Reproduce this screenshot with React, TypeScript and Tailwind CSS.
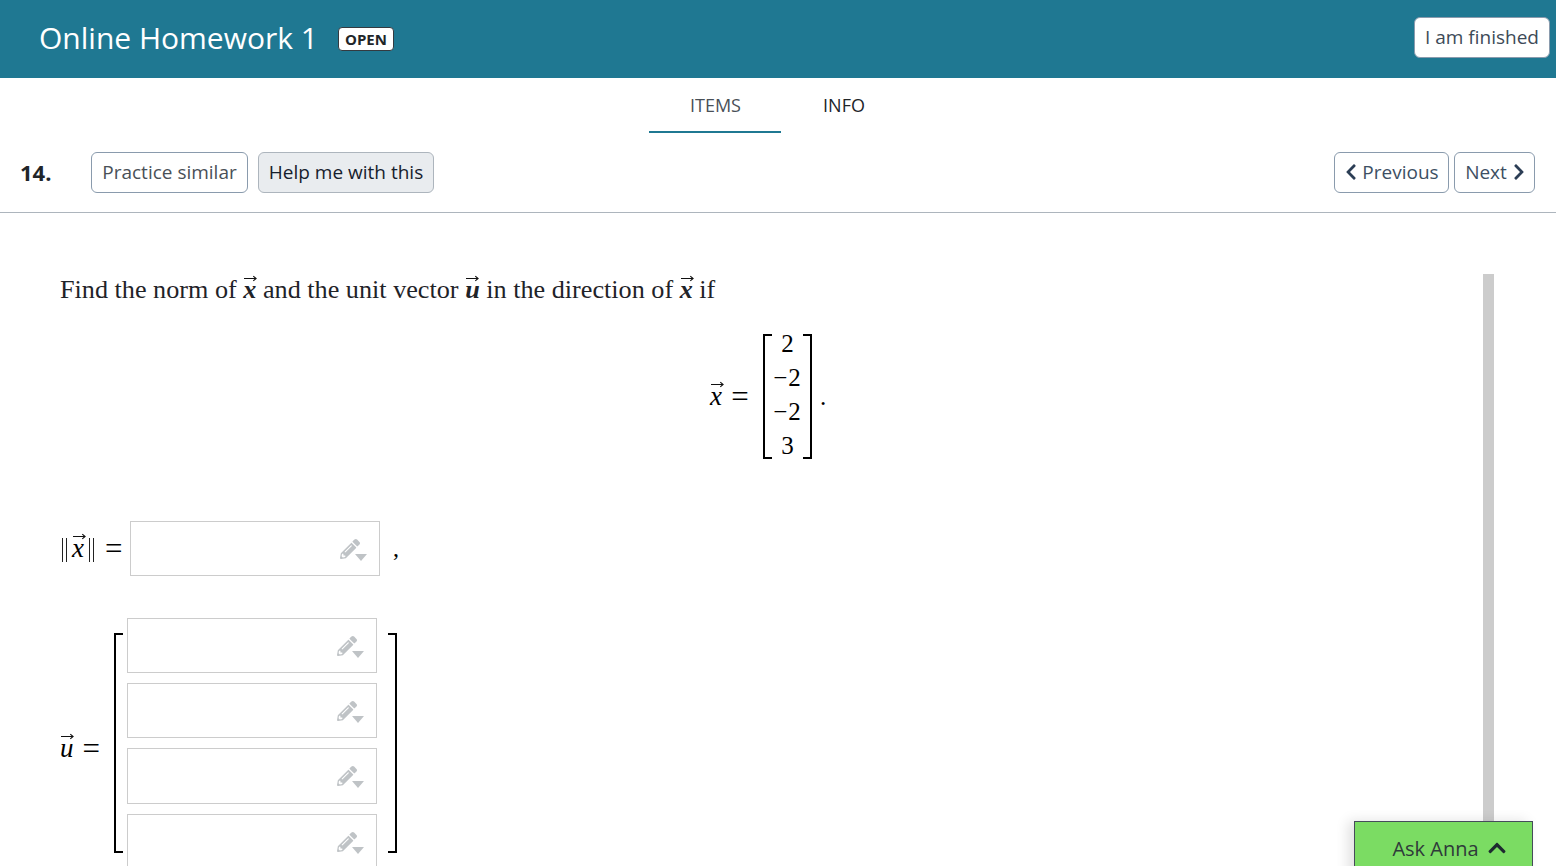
import { FaChevronLeft, FaChevronRight, FaChevronUp, FaPencilAlt } from "react-icons/fa";

const sans = "font-['Open_Sans',sans-serif]";
const serif = "font-['Liberation_Serif',serif]";

// letter with the little arrow on top
const Vec = ({ letter, bold = false }: { letter: string; bold?: boolean }) => (
  <span className={`relative inline-block italic ${bold ? "font-bold" : "font-normal text-[27px] leading-none"}`}>
    {letter}
    <svg
      viewBox="0 0 14 7"
      className={`absolute left-[1px] w-[13px] h-[7px] ${bold ? "top-[3px]" : "top-[-2px]"}`}
      fill="none"
      stroke="#111"
      strokeWidth="1.2"
    >
      <path d="M0 3.5H13M10 1L13 3.5L10 6" />
    </svg>
  </span>
);

const Equals = ({ className = "ml-[3px]" }: { className?: string }) => (
  <span className={`text-[31px] leading-none align-[-2px] ${className}`}>=</span>
);

const Norm = () => <span className="inline-block h-[24px] w-[5px] border-x border-[#222] align-[-5px]" />;

const MathInput = ({ className = "h-[55px]" }: { className?: string }) => (
  <div className={`relative w-[250px] shrink-0 border border-[#cccccc] bg-white ${className}`}>
    <FaPencilAlt className="absolute left-[209px] top-[17px] text-[#bfc3c6] text-[20px]" />
    <div className="absolute left-[224px] top-[32px] w-0 h-0 border-x-[6px] border-x-transparent border-t-[7px] border-t-[#bfc3c6]" />
  </div>
);

const Bracket = ({ side, className = "" }: { side: "l" | "r"; className?: string }) => (
  <div
    className={`w-[9px] border-y-2 border-black ${
      side === "l" ? "border-l-2" : "border-r-2"
    } ${className}`}
  />
);

const App = () => {
  return (
    <div className={`relative h-[866px] w-[1556px] overflow-hidden bg-white flex flex-col ${sans}`}>
      <header className="h-[78px] shrink-0 bg-[#1f7892] flex items-center justify-between pl-[39px] pr-[6px]">
        <div className="flex items-center -mt-[2px]">
          <h1 className="text-[30px] leading-none text-white">Online Homework 1</h1>
          <span className="ml-[20px] mt-[2px] h-[24px] w-[56px] flex items-center justify-center rounded-[4px] border border-[#343a40] bg-white text-[15px] font-bold text-[#212529]">
            OPEN
          </span>
        </div>
        <button className="h-[41px] w-[136px] -mt-[3px] rounded-[6px] border border-[#8a9bad] bg-white text-[19px] text-[#3d4a57]">
          I am finished
        </button>
      </header>

      <nav className="h-[55px] shrink-0 flex justify-center text-[18px]">
        <div className="w-[132px] flex items-center justify-center border-b-2 border-[#1f7892] text-[#495057] pt-[2px] pl-[1px]">
          ITEMS
        </div>
        <div className="w-[126px] flex items-center justify-center text-[#212529]">INFO</div>
      </nav>

      <div className="h-[80px] shrink-0 border-b border-[#adb5bd] flex items-center justify-between pl-[20px] pr-[21px] pb-[1px]">
        <div className="flex items-center">
          <span className="w-[71px] text-[22px] font-bold text-[#212529] mt-[1px]">14.</span>
          <button className="h-[41px] w-[157px] rounded-[6px] border border-[#8a9bad] bg-white text-[19px] text-[#495057]">
            Practice similar
          </button>
          <button className="ml-[10px] h-[41px] w-[176px] rounded-[6px] border border-[#adb5bd] bg-[#e9ecef] text-[19px] text-[#16202c]">
            Help me with this
          </button>
        </div>
        <div className="flex items-center gap-[5px] text-[19px] text-[#3d4f63]">
          <button className="h-[41px] w-[115px] flex items-center justify-center gap-[2px] pr-[2px] rounded-[6px] border border-[#8a9bad] bg-white">
            <FaChevronLeft className="text-[#2c3e55] text-[18px]" />
            Previous
          </button>
          <button className="h-[41px] w-[81px] flex items-center justify-center gap-[3px] pl-[4px] rounded-[6px] border border-[#8a9bad] bg-white">
            Next
            <FaChevronRight className="text-[#2c3e55] text-[18px]" />
          </button>
        </div>
      </div>

      <main className="flex flex-1 min-h-0">
        <div className={`flex-1 pl-[60px] pt-[59px] text-[#1f2328] ${serif}`}>
          <p className="text-[26.2px] leading-[36px]">
            Find the norm of <Vec letter="x" bold /> and the unit vector <Vec letter="u" bold /> in the direction of{" "}
            <Vec letter="x" bold /> if
          </p>

          <div className="mt-[26px] h-[125px] ml-[650px] flex items-center text-[25px] text-black">
            <span className="w-[53px] whitespace-nowrap">
              <Vec letter="x" /> <Equals />
            </span>
            <Bracket side="l" className="h-[125px]" />
            <div className="w-[31px] h-[136px] mb-[3px] flex flex-col items-center leading-[34px]">
              <span>2</span>
              <span className="tracking-[1px]">−2</span>
              <span className="tracking-[1px]">−2</span>
              <span>3</span>
            </div>
            <Bracket side="r" className="h-[125px]" />
            <span className="ml-[8px]">.</span>
          </div>

          <div className="mt-[62px] flex items-center text-[24px] text-black">
            <span className="w-[70px] pl-[2px] whitespace-nowrap">
              <Norm />
              <span className="mx-[5px]">
                <Vec letter="x" />
              </span>
              <Norm /> <Equals className="ml-[5px]" />
            </span>
            <MathInput />
            <span className="ml-[13px] -mt-[2px]">,</span>
          </div>

          <div className="mt-[42px] flex text-[24px] text-black">
            <span className="w-[54px] self-center whitespace-nowrap mt-[10px]">
              <Vec letter="u" /> <Equals />
            </span>
            <Bracket side="l" className="mt-[15px] mb-[16px]" />
            <div className="ml-[4px] flex flex-col gap-[10px]">
              <MathInput />
              <MathInput />
              <MathInput className="h-[56px]" />
              <MathInput />
            </div>
            <Bracket side="r" className="ml-[11px] mt-[15px] mb-[16px]" />
          </div>
        </div>
        <div className="w-[11px] mt-[61px] mr-[62px] shrink-0 bg-[#cccccc]" />
      </main>

      <button className="absolute left-[1354px] top-[821px] h-[60px] w-[179px] flex items-start justify-center gap-[8px] pl-[12px] pt-[13px] border border-[#454c5a] bg-[#7bdc63] text-[20px] leading-[28px] text-[#2f3a3a] shadow-[-6px_0_12px_rgba(0,0,0,0.12)]">
        Ask Anna
        <FaChevronUp className="mt-[3px] text-[20px] text-[#1e2a30]" />
      </button>
    </div>
  );
};

export default App;
